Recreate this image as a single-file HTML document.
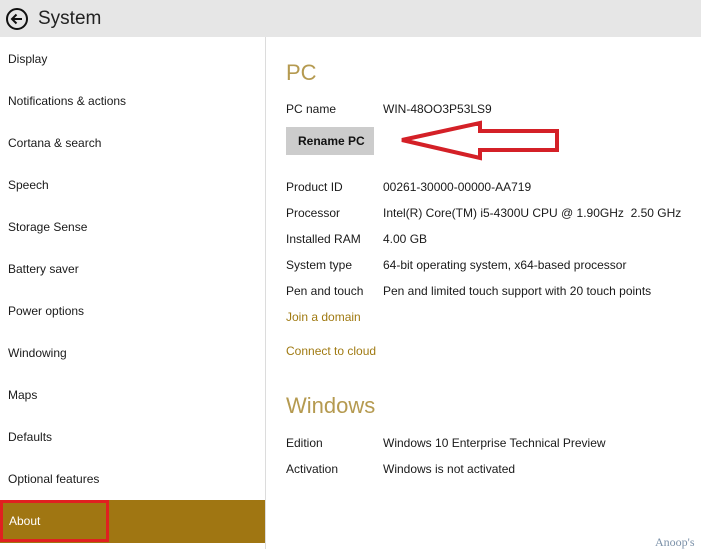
<!DOCTYPE html>
<html><head><style>
*{margin:0;padding:0;box-sizing:border-box}
body{width:701px;height:549px;overflow:hidden;background:#fff;font-family:"Liberation Sans",sans-serif;color:#1a1a1a;position:relative}
.t{position:absolute;font-size:12px;white-space:nowrap;line-height:14px}
.hdr{position:absolute;left:0;top:0;width:701px;height:37px;background:#e6e6e6}
.side{position:absolute;left:265px;top:37px;width:1px;height:512px;background:#dcdcdc}
.gold{color:#a07a12}
</style></head><body>
<div class="hdr"></div>
<svg style="position:absolute;left:5px;top:7px" width="24" height="24" viewBox="0 0 24 24"><circle cx="12" cy="12" r="10" fill="none" stroke="#111" stroke-width="2"/><path d="M17 12H7M11.5 7.5L7 12l4.5 4.5" fill="none" stroke="#111" stroke-width="2"/></svg>
<div class="t" style="left:38px;top:8px;font-size:19px;line-height:22px;color:#222">System</div>
<div class="side"></div>
<div class="t" style="left:8px;top:52px">Display</div>
<div class="t" style="left:8px;top:94px">Notifications &amp; actions</div>
<div class="t" style="left:8px;top:136px">Cortana &amp; search</div>
<div class="t" style="left:8px;top:178px">Speech</div>
<div class="t" style="left:8px;top:220px">Storage Sense</div>
<div class="t" style="left:8px;top:262px">Battery saver</div>
<div class="t" style="left:8px;top:304px">Power options</div>
<div class="t" style="left:8px;top:346px">Windowing</div>
<div class="t" style="left:8px;top:388px">Maps</div>
<div class="t" style="left:8px;top:430px">Defaults</div>
<div class="t" style="left:8px;top:472px">Optional features</div>
<div style="position:absolute;left:0;top:500px;width:265px;height:43px;background:#a07612"></div>
<div style="position:absolute;left:0;top:500px;width:109px;height:42px;border:3px solid #e02020"></div>
<div class="t" style="left:9px;top:514px;color:#fff">About</div>

<div class="t gold" style="left:286px;top:60px;font-size:22px;line-height:26px;color:#b59a50">PC</div>
<div class="t" style="left:286px;top:102px">PC name</div>
<div class="t" style="left:383px;top:102px">WIN-48OO3P53LS9</div>
<div style="position:absolute;left:286px;top:127px;width:88px;height:28px;background:#cccccc"></div>
<div class="t" style="left:298px;top:134px;font-weight:bold;color:#111">Rename PC</div>
<svg style="position:absolute;left:0;top:0" width="701" height="549"><path d="M402 140L480 123V131H557V150H480V158Z" fill="none" stroke="#d42027" stroke-width="4" stroke-linejoin="miter"/></svg>
<div class="t" style="left:286px;top:180px">Product ID</div>
<div class="t" style="left:383px;top:180px">00261-30000-00000-AA719</div>
<div class="t" style="left:286px;top:206px">Processor</div>
<div class="t" style="left:383px;top:206px">Intel(R) Core(TM) i5-4300U CPU @ 1.90GHz&nbsp;&nbsp;2.50 GHz</div>
<div class="t" style="left:286px;top:232px">Installed RAM</div>
<div class="t" style="left:383px;top:232px">4.00 GB</div>
<div class="t" style="left:286px;top:258px">System type</div>
<div class="t" style="left:383px;top:258px">64-bit operating system, x64-based processor</div>
<div class="t" style="left:286px;top:284px">Pen and touch</div>
<div class="t" style="left:383px;top:284px">Pen and limited touch support with 20 touch points</div>
<div class="t gold" style="left:286px;top:310px">Join a domain</div>
<div class="t gold" style="left:286px;top:344px">Connect to cloud</div>
<div class="t" style="left:286px;top:393px;font-size:22px;line-height:26px;color:#b59a50">Windows</div>
<div class="t" style="left:286px;top:436px">Edition</div>
<div class="t" style="left:383px;top:436px">Windows 10 Enterprise Technical Preview</div>
<div class="t" style="left:286px;top:462px">Activation</div>
<div class="t" style="left:383px;top:462px">Windows is not activated</div>
<div class="t" style="left:655px;top:535px;font-family:'Liberation Serif',serif;font-size:12px;color:#7a90a8">Anoop's</div>
</body></html>
